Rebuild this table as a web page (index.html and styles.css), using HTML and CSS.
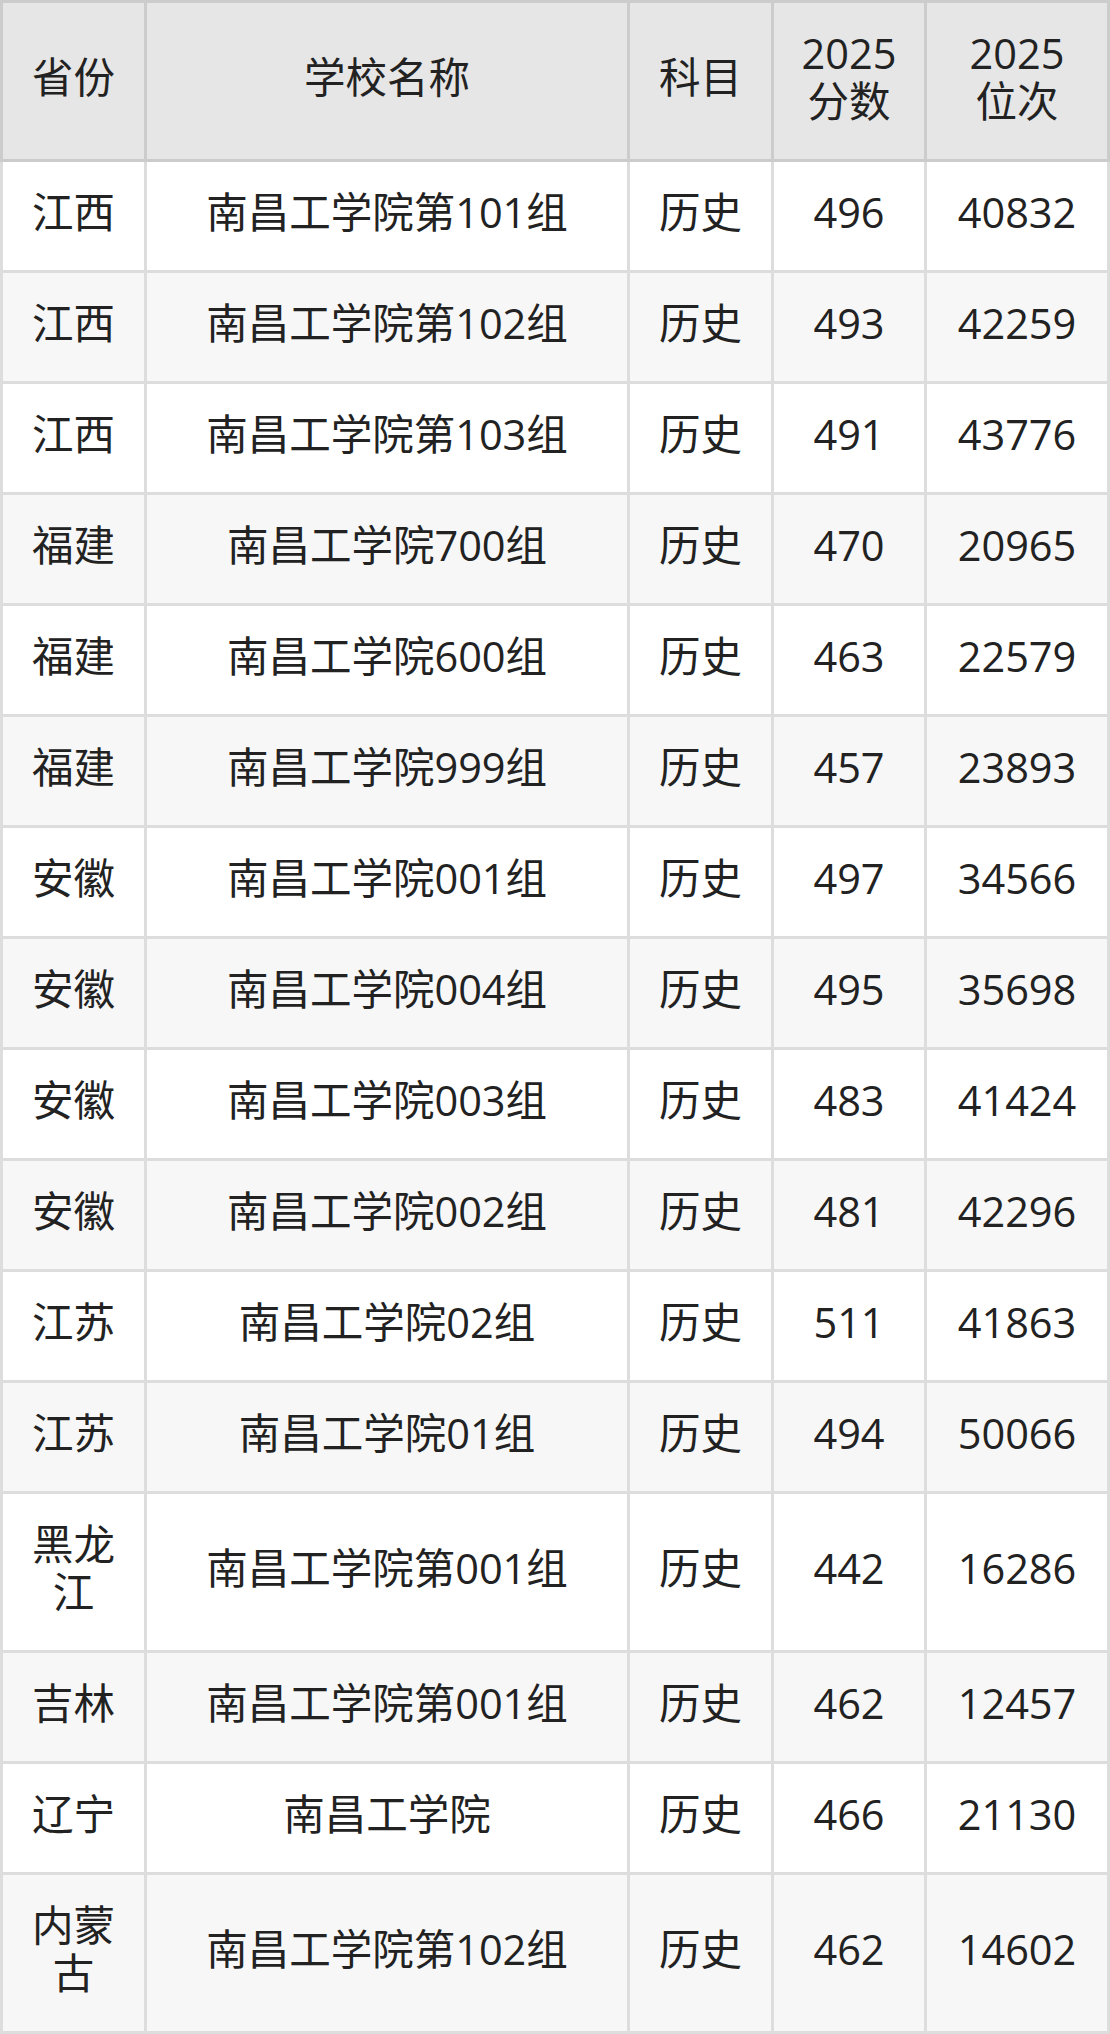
FILE: index.html
```html
<!DOCTYPE html>
<html lang="zh-CN">
<head>
<meta charset="utf-8">
<title>南昌工学院 2025 分数位次</title>
<link rel="stylesheet" href="styles.css">
</head>
<body>
<table class="score-table">
  <colgroup>
    <col class="c-prov">
    <col class="c-school">
    <col class="c-subj">
    <col class="c-score">
    <col class="c-rank">
  </colgroup>
  <thead>
    <tr>
      <th>省份</th>
      <th>学校名称</th>
      <th>科目</th>
      <th>2025<br>分数</th>
      <th>2025<br>位次</th>
    </tr>
  </thead>
  <tbody>
    <tr><td>江西</td><td>南昌工学院第101组</td><td>历史</td><td>496</td><td>40832</td></tr>
    <tr><td>江西</td><td>南昌工学院第102组</td><td>历史</td><td>493</td><td>42259</td></tr>
    <tr><td>江西</td><td>南昌工学院第103组</td><td>历史</td><td>491</td><td>43776</td></tr>
    <tr><td>福建</td><td>南昌工学院700组</td><td>历史</td><td>470</td><td>20965</td></tr>
    <tr><td>福建</td><td>南昌工学院600组</td><td>历史</td><td>463</td><td>22579</td></tr>
    <tr><td>福建</td><td>南昌工学院999组</td><td>历史</td><td>457</td><td>23893</td></tr>
    <tr><td>安徽</td><td>南昌工学院001组</td><td>历史</td><td>497</td><td>34566</td></tr>
    <tr><td>安徽</td><td>南昌工学院004组</td><td>历史</td><td>495</td><td>35698</td></tr>
    <tr><td>安徽</td><td>南昌工学院003组</td><td>历史</td><td>483</td><td>41424</td></tr>
    <tr><td>安徽</td><td>南昌工学院002组</td><td>历史</td><td>481</td><td>42296</td></tr>
    <tr><td>江苏</td><td>南昌工学院02组</td><td>历史</td><td>511</td><td>41863</td></tr>
    <tr><td>江苏</td><td>南昌工学院01组</td><td>历史</td><td>494</td><td>50066</td></tr>
    <tr><td>黑龙江</td><td>南昌工学院第001组</td><td>历史</td><td>442</td><td>16286</td></tr>
    <tr><td>吉林</td><td>南昌工学院第001组</td><td>历史</td><td>462</td><td>12457</td></tr>
    <tr><td>辽宁</td><td>南昌工学院</td><td>历史</td><td>466</td><td>21130</td></tr>
    <tr><td>内蒙古</td><td>南昌工学院第102组</td><td>历史</td><td>462</td><td>14602</td></tr>
  </tbody>
</table>
</body>
</html>
```

FILE: styles.css
```css
html, body {
  margin: 0;
  padding: 0;
  background: #ffffff;
}

.score-table {
  width: 1110px;
  table-layout: fixed;
  border-collapse: collapse;
  font-family: "Open Sans", "Noto Sans CJK SC", "Noto Sans", sans-serif;
  font-size: 41.5px;
  line-height: 48px;
  color: #222222;
}

.c-prov { width: 144px; }
.c-school { width: 483px; }
.c-subj { width: 144px; }
.c-score { width: 153px; }
.c-rank { width: 183px; }

.score-table th,
.score-table td {
  padding: 26px 15px 34px;
  text-align: center;
  vertical-align: middle;
  font-weight: normal;
}

.score-table td {
  border: 3px solid #dddddd;
}

.score-table th {
  background: #e6e6e6;
  border: 3px solid #cccccc;
}

.score-table tbody tr:nth-child(even) td {
  background: #f7f7f7;
}
```
